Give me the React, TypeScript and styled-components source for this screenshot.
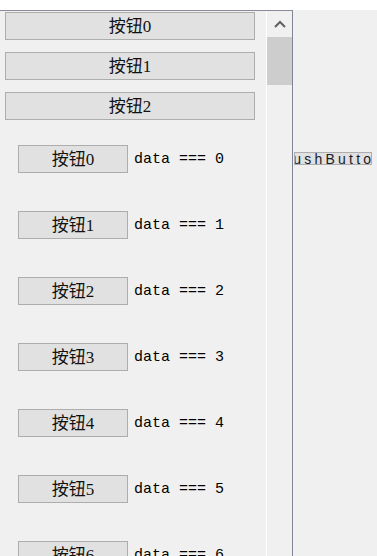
import React from 'react';
import styled, { createGlobalStyle } from 'styled-components';

const GlobalStyle = createGlobalStyle`
  html, body {
    margin: 0;
    padding: 0;
    background: #ffffff;
  }
  body {
    font-family: "Liberation Serif", "Noto Sans CJK SC", serif;
    overflow: hidden;
  }
`;

const Window = styled.div`
  display: flex;
  margin-top: 10px;
  height: 546px;
`;

const ScrollArea = styled.div`
  width: 293px;
  box-sizing: border-box;
  display: flex;
  background: #f0f0f0;
  border-top: 1px solid #878b9c;
  border-right: 1px solid #7f8596;
  overflow: hidden;
`;

const Viewport = styled.div`
  width: 266px;
  box-sizing: border-box;
  padding: 1px 11px 0 5px;
  overflow: hidden;
`;

const QtButton = styled.button<{ $wide?: boolean }>`
  display: flex;
  align-items: center;
  justify-content: center;
  box-sizing: border-box;
  width: ${({ $wide }) => ($wide ? '100%' : '110px')};
  height: 28px;
  margin: 0;
  padding: 0 0 3px;
  background: #e1e1e1;
  border: 1px solid #adadad;
  border-radius: 0;
  color: #111;
  font-family: "Liberation Serif", "Noto Sans CJK SC", serif;
  font-size: 17px;
  flex-shrink: 0;
`;

const TopList = styled.div`
  display: flex;
  flex-direction: column;
  gap: 12px;
`;

const Rows = styled.div`
  display: flex;
  flex-direction: column;
  gap: 38px;
  padding: 25px 0 0 13px;
`;

const Row = styled.div`
  display: flex;
  align-items: center;
  gap: 6px;
  height: 28px;
`;

const DataLabel = styled.span`
  font-family: "Liberation Mono", "DejaVu Sans Mono", monospace;
  font-size: 15px;
  color: #000;
  white-space: pre;
`;

const ScrollBar = styled.div`
  width: 26px;
  box-sizing: border-box;
  border-left: 1px solid #ffffff;
  display: flex;
  flex-direction: column;
  background: #f0f0f0;
`;

const ArrowButton = styled.div`
  height: 26px;
  display: flex;
  align-items: center;
  justify-content: center;
`;

const Thumb = styled.div`
  height: 48px;
  background: #cdcdcd;
`;

const SidePanel = styled.div`
  flex: 1;
  background: #f0f0f0;
  padding: 142px 0 0 1px;
`;

const MiniButton = styled.div`
  width: 78px;
  height: 13px;
  box-sizing: border-box;
  background: #e1e1e1;
  border: 1px solid #adadad;
  display: flex;
  justify-content: center;
  align-items: flex-end;
  overflow: hidden;
  font-family: "Liberation Sans", Arial, sans-serif;
  font-size: 14px;
  line-height: 14px;
  letter-spacing: 3.2px;
  color: #1a1a2a;
  white-space: nowrap;
`;

const MiniText = styled.span`
  margin-bottom: -2px;
`;

const App: React.FC = () => {
  const top = [0, 1, 2];
  const rows = [0, 1, 2, 3, 4, 5, 6, 7];

  return (
    <>
      <GlobalStyle />
      <Window>
        <ScrollArea>
          <Viewport>
            <TopList>
              {top.map((i) => (
                <QtButton key={i} $wide>按钮{i}</QtButton>
              ))}
            </TopList>
            <Rows>
              {rows.map((i) => (
                <Row key={i}>
                  <QtButton>按钮{i}</QtButton>
                  <DataLabel>data === {i}</DataLabel>
                </Row>
              ))}
            </Rows>
          </Viewport>
          <ScrollBar>
            <ArrowButton>
              <svg width="12" height="8" viewBox="0 0 12 8">
                <path d="M1 7 L6 2 L11 7" fill="none" stroke="#606060" strokeWidth="2" />
              </svg>
            </ArrowButton>
            <Thumb />
          </ScrollBar>
        </ScrollArea>
        <SidePanel>
          <MiniButton>
            <MiniText>PushButton</MiniText>
          </MiniButton>
        </SidePanel>
      </Window>
    </>
  );
};

export default App;
